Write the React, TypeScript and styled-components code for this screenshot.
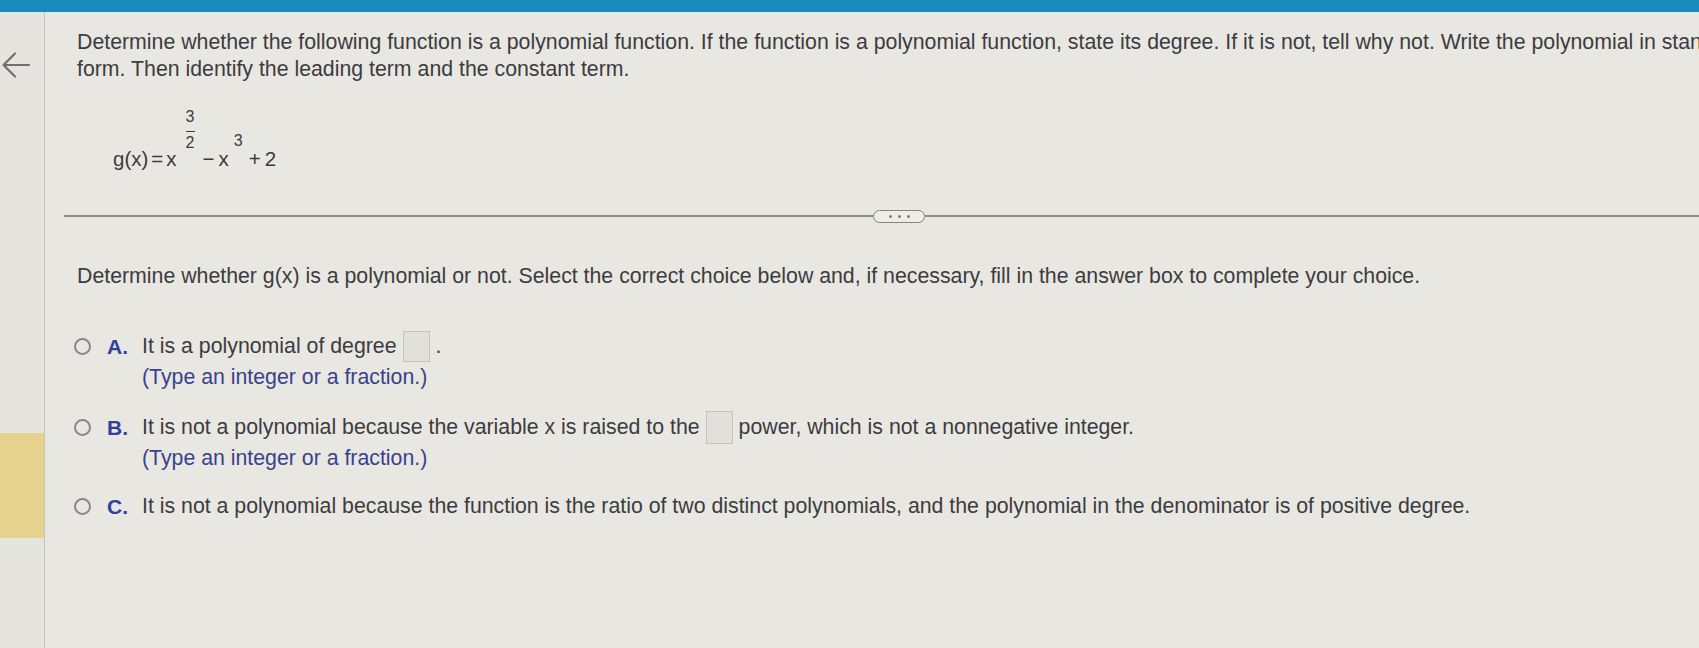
import React from "react";
import styled, { createGlobalStyle } from "styled-components";

const Global = createGlobalStyle`
  html, body { margin: 0; padding: 0; background: #e8e6e1; }
  body { font-family: "Liberation Sans", Arial, sans-serif; color: #3c3c3f; }
`;

const Page = styled.div`
  width: 1699px;
  height: 648px;
  overflow: hidden;
  display: flex;
  flex-direction: column;
  background: #e9e7e2;
`;

const TopBar = styled.div`
  height: 12px;
  flex: none;
  background: #1a8bbd;
`;

const Body = styled.div`
  flex: 1;
  display: flex;
  min-height: 0;
`;

const Sidebar = styled.div`
  width: 44px;
  flex: none;
  border-right: 1.5px solid #c6c4be;
  background: #e6e4df;
  display: flex;
  flex-direction: column;
`;

const BackButton = styled.div`
  height: 28px;
  margin-top: 39px;
  display: flex;
  align-items: center;
  padding-left: 1px;
`;

const Highlight = styled.div`
  margin-top: 354px;
  height: 105px;
  background: #e5d28f;
`;

const Main = styled.div`
  flex: 1;
  padding: 17px 0 0 19px;
  display: flex;
  flex-direction: column;
  min-width: 0;
`;

const Paragraph = styled.div<{ $top?: number }>`
  margin-top: ${(p) => p.$top ?? 0}px;
  padding-left: 13px;
  font-size: 21.3px;
  line-height: 27px;
  white-space: nowrap;
`;

const Formula = styled.div`
  margin-top: 27px;
  padding-left: 49px;
  height: 60px;
  display: flex;
  align-items: flex-end;
  font-size: 20.5px;
  white-space: pre;
`;

const Base = styled.span<{ $gap?: number }>`
  line-height: 22px;
  margin-left: ${(p) => p.$gap ?? 0}px;
`;

const FracExponent = styled.span`
  display: inline-flex;
  flex-direction: column;
  align-items: center;
  font-size: 16px;
  line-height: 16px;
  margin: 0 0 19px 9px;
`;

const FracBar = styled.span`
  width: 9px;
  height: 1.5px;
  background: #3c3c3f;
  margin: 5.5px 0 3px;
`;

const Sup = styled.span`
  font-size: 16px;
  line-height: 16px;
  margin: 0 0 21px 5px;
`;

const DividerRow = styled.div`
  margin-top: 38px;
  display: flex;
  align-items: center;
  height: 16px;
`;

const Rule = styled.div<{ $width?: number }>`
  ${(p) => (p.$width ? `width: ${p.$width}px; flex: none;` : "flex: 1;")}
  height: 1.5px;
  background: #8c8b88;
`;

const Pill = styled.div`
  width: 50px;
  height: 11px;
  flex: none;
  border: 1.5px solid #858481;
  border-radius: 8px;
  background: #eeede9;
  display: flex;
  align-items: center;
  justify-content: center;
  gap: 6px;
`;

const Dot = styled.span`
  width: 3px;
  height: 3px;
  border-radius: 50%;
  background: #7b7a77;
`;

const Options = styled.div`
  margin-top: 41px;
  padding-left: 10px;
  display: flex;
  flex-direction: column;
`;

const Option = styled.div<{ $top?: number }>`
  display: flex;
  align-items: flex-start;
  margin-top: ${(p) => p.$top ?? 0}px;
`;

const Radio = styled.span`
  width: 13px;
  height: 13px;
  border-radius: 50%;
  border: 2.5px solid #878792;
  flex: none;
  margin-top: 7px;
`;

const Letter = styled.span`
  width: 51px;
  padding-left: 16px;
  box-sizing: border-box;
  font-weight: bold;
  color: #31409a;
  font-size: 21px;
  line-height: 31px;
  flex: none;
`;

const OptionText = styled.div`
  font-size: 21.3px;
  line-height: 31px;
  white-space: nowrap;
`;

const Hint = styled.div`
  color: #37438a;
`;

const AnswerBox = styled.span<{ $w: number; $h: number; $side: number }>`
  display: inline-block;
  width: ${(p) => p.$w}px;
  height: ${(p) => p.$h}px;
  box-sizing: border-box;
  border: 1.5px solid #c3c2bd;
  background: #e1e0db;
  vertical-align: middle;
  margin: -6px ${(p) => p.$side}px -4px ${(p) => p.$side}px;
`;

export default function App() {
  return (
    <>
      <Global />
      <Page>
        <TopBar />
        <Body>
          <Sidebar>
            <BackButton>
              <svg width="30" height="28" viewBox="0 0 30 28" fill="none">
                <path d="M28 14H2.5M14 2.5L2.5 14 14 25.5" stroke="#707073" strokeWidth="2.2" strokeLinecap="round" strokeLinejoin="round" />
              </svg>
            </BackButton>
            <Highlight />
          </Sidebar>
          <Main>
            <Paragraph>
              Determine whether the following function is a polynomial function. If the function is a polynomial function, state its degree. If it is not, tell why not. Write the polynomial in standard
              <br />
              form. Then identify the leading term and the constant term.
            </Paragraph>
            <Formula>
              <Base>g(x)</Base>
              <Base $gap={3}>=</Base>
              <Base $gap={3}>x</Base>
              <FracExponent>
                <span>3</span>
                <FracBar />
                <span>2</span>
              </FracExponent>
              <Base $gap={8}>−</Base>
              <Base $gap={4}>x</Base>
              <Sup>3</Sup>
              <Base $gap={6}>+</Base>
              <Base $gap={4}>2</Base>
            </Formula>
            <DividerRow>
              <Rule $width={809} />
              <Pill>
                <Dot />
                <Dot />
                <Dot />
              </Pill>
              <Rule />
            </DividerRow>
            <Paragraph $top={39}>
              Determine whether g(x) is a polynomial or not. Select the correct choice below and, if necessary, fill in the answer box to complete your choice.
            </Paragraph>
            <Options>
              <Option>
                <Radio />
                <Letter>A.</Letter>
                <OptionText>
                  <div>
                    It is a polynomial of degree<AnswerBox $w={27} $h={31} $side={6} />.
                  </div>
                  <Hint>(Type an integer or a fraction.)</Hint>
                </OptionText>
              </Option>
              <Option $top={19}>
                <Radio />
                <Letter>B.</Letter>
                <OptionText>
                  <div>
                    It is not a polynomial because the variable x is raised to the<AnswerBox $w={27} $h={33} $side={6} />power, which is not a nonnegative integer.
                  </div>
                  <Hint>(Type an integer or a fraction.)</Hint>
                </OptionText>
              </Option>
              <Option $top={17}>
                <Radio />
                <Letter>C.</Letter>
                <OptionText>
                  <div>
                    It is not a polynomial because the function is the ratio of two distinct polynomials, and the polynomial in the denominator is of positive degree.
                  </div>
                </OptionText>
              </Option>
            </Options>
          </Main>
        </Body>
      </Page>
    </>
  );
}
